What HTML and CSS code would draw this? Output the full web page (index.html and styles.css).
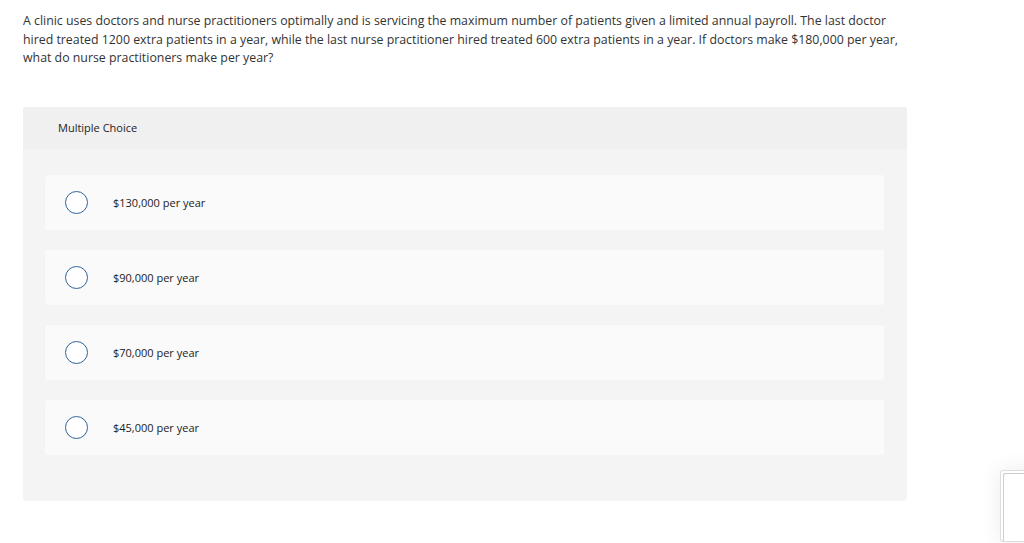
FILE: index.html
```html
<!DOCTYPE html>
<html>
<head>
<meta charset="utf-8">
<link rel="stylesheet" href="styles.css">
</head>
<body>
<div class="page">
  <p class="question">A clinic uses doctors and nurse practitioners optimally and is servicing the maximum number of patients given a limited annual payroll. The last doctor hired treated 1200 extra patients in a year, while the last nurse practitioner hired treated 600 extra patients in a year. If doctors make $180,000 per year, what do nurse practitioners make per year?</p>
  <section class="panel">
    <header class="panel-head">Multiple Choice</header>
    <div class="choices">
      <label class="choice"><span class="radio"></span><span class="label">$130,000 per year</span></label>
      <label class="choice"><span class="radio"></span><span class="label">$90,000 per year</span></label>
      <label class="choice"><span class="radio"></span><span class="label">$70,000 per year</span></label>
      <label class="choice"><span class="radio"></span><span class="label">$45,000 per year</span></label>
    </div>
  </section>
</div>
<div class="corner-box"></div>
</body>
</html>
```
FILE: styles.css
```css
html, body {
  margin: 0;
  padding: 0;
  background: #fff;
  overflow: hidden;
  height: 543px;
}
body {
  font-family: "Open Sans", "Liberation Sans", sans-serif;
  color: #333;
}
.page {
  padding: 12px 0 0 23px;
  width: 884px;
}
.question {
  margin: 0;
  font-size: 12.35px;
  line-height: 18.5px;
  width: 875px;
}
.panel {
  margin-top: 39px;
  background: #f4f4f4;
  border-radius: 3px;
  height: 394px;
  overflow: hidden;
}
.panel-head {
  background: #f0f0f0;
  height: 42px;
  display: flex;
  align-items: center;
  padding-left: 35px;
  font-size: 11px;
  color: #222;
}
.choices {
  display: flex;
  flex-direction: column;
  gap: 20px;
  padding: 26px 23px 0 22px;
}
.choice {
  display: flex;
  align-items: center;
  height: 55px;
  background: #fafafa;
  border-radius: 2px;
  padding-left: 20px;
  font-size: 11px;
  color: #222;
}
.radio {
  width: 21px;
  height: 21px;
  border: 1px solid #2b639b;
  border-radius: 50%;
  background: #fff;
  flex: none;
}
.label {
  margin-left: 25px;
}
.corner-box {
  position: absolute;
  left: 1000px;
  top: 470px;
  width: 60px;
  height: 70px;
  background: #fff;
  border: 1px solid #ddd;
  border-radius: 3px;
  box-shadow: 0 0 22px rgba(0,0,0,0.08), inset 2px 2px 0 #fff, inset 3px 3px 0 #ccc;
}
```
